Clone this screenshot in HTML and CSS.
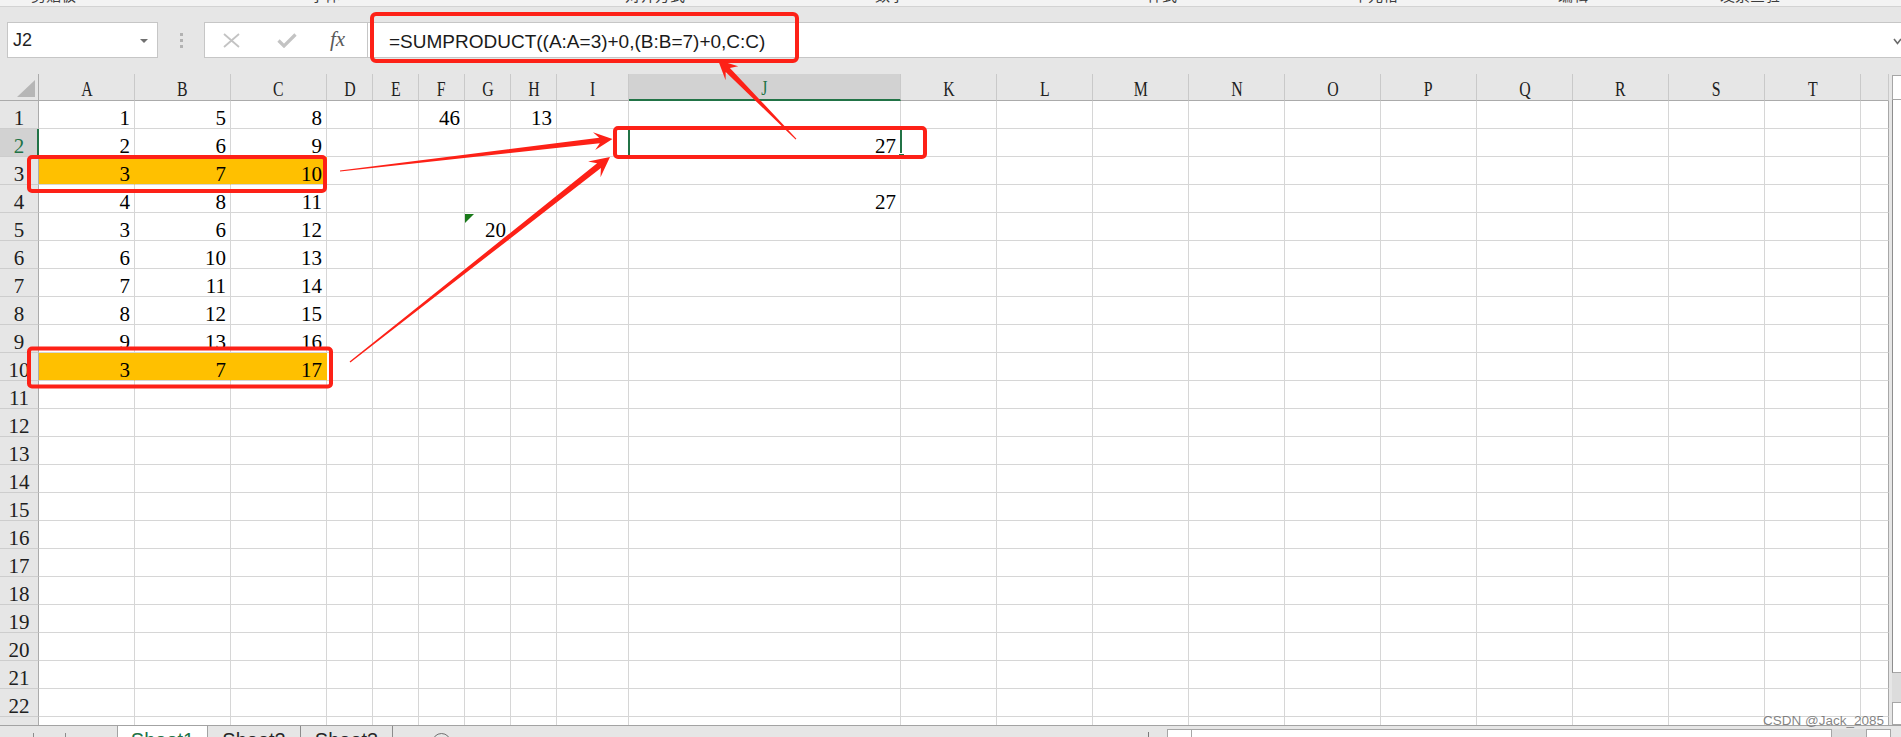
FILE: index.html
```html
<!DOCTYPE html>
<html lang="zh-CN">
<head>
<meta charset="utf-8">
<title>Excel SUMPRODUCT</title>
<link rel="stylesheet" href="styles.css">
</head>
<body>
<div class="ribbon">
  <div class="ribbon-labels"><span>剪贴板</span><span>字体</span><span>对齐方式</span><span>数字</span><span>样式</span><span>单元格</span><span>编辑</span><span>发票查验</span></div>
</div>
<div class="fbar">
  <div class="namebox">J2<span class="nb-arrow"></span></div>
  <div class="dots"><span></span><span></span><span></span></div>
  <div class="fx-icons">
    <svg class="ic-x" width="19" height="15" viewBox="0 0 19 15"><path d="M2 1 L17 14 M17 1 L2 14" stroke="#c3c3c3" stroke-width="1.8" fill="none"/></svg>
    <svg class="ic-ok" width="20" height="15" viewBox="0 0 20 15"><path d="M1.5 7.5 L7 13 L18.5 1.5" stroke="#c3c3c3" stroke-width="3.2" fill="none"/></svg>
    <span class="ic-fx">fx</span>
  </div>
  <div class="formula">=SUMPRODUCT((A:A=3)+0,(B:B=7)+0,C:C)<svg class="chev" width="8" height="7" viewBox="0 0 8 7"><path d="M1 1 L4.5 5.5 L8 1" stroke="#6a6a6a" stroke-width="1.6" fill="none"/></svg></div>
</div>
<div class="main">
  <div class="sheet">
    <div class="row hdr">
      <div class="corner"><svg width="18" height="17" viewBox="0 0 18 17"><polygon points="18,0 18,17 0,17" fill="#b6b6b6"/></svg></div>
      <div class="h"><span>A</span></div><div class="h"><span>B</span></div><div class="h"><span>C</span></div><div class="h"><span>D</span></div><div class="h"><span>E</span></div><div class="h"><span>F</span></div><div class="h"><span>G</span></div><div class="h"><span>H</span></div><div class="h"><span>I</span></div><div class="h hsel"><span>J</span></div><div class="h"><span>K</span></div><div class="h"><span>L</span></div><div class="h"><span>M</span></div><div class="h"><span>N</span></div><div class="h"><span>O</span></div><div class="h"><span>P</span></div><div class="h"><span>Q</span></div><div class="h"><span>R</span></div><div class="h"><span>S</span></div><div class="h"><span>T</span></div><div class="h"></div>
    </div>
    <div class="row"><b>1</b> <i>1</i><i>5</i><i>8</i><i></i><i></i><i>46</i><i></i><i>13</i> <i></i><i></i><i></i><i></i><i></i><i></i><i></i> <i></i><i></i><i></i><i></i><i></i><i></i></div>
    <div class="row"><b class="sel">2</b> <i>2</i><i>6</i><i>9</i> <i></i><i></i><i></i><i></i><i></i><i></i> <i class="active">27</i> <i></i><i></i><i></i><i></i><i></i><i></i><i></i> <i></i><i></i><i></i><i></i></div>
    <div class="row"><b>3</b> <i class="hl">3</i><i class="hl">7</i><i class="hl">10</i> <i></i><i></i><i></i><i></i><i></i><i></i><i></i> <i></i><i></i><i></i><i></i><i></i><i></i><i></i> <i></i><i></i><i></i><i></i></div>
    <div class="row"><b>4</b> <i>4</i><i>8</i><i>11</i> <i></i><i></i><i></i><i></i><i></i><i></i> <i>27</i> <i></i><i></i><i></i><i></i><i></i><i></i><i></i> <i></i><i></i><i></i><i></i></div>
    <div class="row"><b>5</b> <i>3</i><i>6</i><i>12</i> <i></i><i></i><i></i> <i class="err">20</i> <i></i><i></i><i></i><i></i><i></i><i></i><i></i> <i></i><i></i><i></i><i></i><i></i><i></i><i></i></div>
    <div class="row"><b>6</b> <i>6</i><i>10</i><i>13</i> <i></i><i></i><i></i><i></i><i></i><i></i><i></i> <i></i><i></i><i></i><i></i><i></i><i></i><i></i> <i></i><i></i><i></i><i></i></div>
    <div class="row"><b>7</b> <i>7</i><i>11</i><i>14</i> <i></i><i></i><i></i><i></i><i></i><i></i><i></i> <i></i><i></i><i></i><i></i><i></i><i></i><i></i> <i></i><i></i><i></i><i></i></div>
    <div class="row"><b>8</b> <i>8</i><i>12</i><i>15</i> <i></i><i></i><i></i><i></i><i></i><i></i><i></i> <i></i><i></i><i></i><i></i><i></i><i></i><i></i> <i></i><i></i><i></i><i></i></div>
    <div class="row"><b>9</b> <i>9</i><i>13</i><i>16</i> <i></i><i></i><i></i><i></i><i></i><i></i><i></i> <i></i><i></i><i></i><i></i><i></i><i></i><i></i> <i></i><i></i><i></i><i></i></div>
    <div class="row"><b>10</b> <i class="hl">3</i><i class="hl">7</i><i class="hl">17</i> <i></i><i></i><i></i><i></i><i></i><i></i><i></i> <i></i><i></i><i></i><i></i><i></i><i></i><i></i> <i></i><i></i><i></i><i></i></div>
    <div class="row"><b>11</b> <i></i><i></i><i></i><i></i><i></i><i></i><i></i> <i></i><i></i><i></i><i></i><i></i><i></i><i></i> <i></i><i></i><i></i><i></i><i></i><i></i><i></i></div>
    <div class="row"><b>12</b> <i></i><i></i><i></i><i></i><i></i><i></i><i></i> <i></i><i></i><i></i><i></i><i></i><i></i><i></i> <i></i><i></i><i></i><i></i><i></i><i></i><i></i></div>
    <div class="row"><b>13</b> <i></i><i></i><i></i><i></i><i></i><i></i><i></i> <i></i><i></i><i></i><i></i><i></i><i></i><i></i> <i></i><i></i><i></i><i></i><i></i><i></i><i></i></div>
    <div class="row"><b>14</b> <i></i><i></i><i></i><i></i><i></i><i></i><i></i> <i></i><i></i><i></i><i></i><i></i><i></i><i></i> <i></i><i></i><i></i><i></i><i></i><i></i><i></i></div>
    <div class="row"><b>15</b> <i></i><i></i><i></i><i></i><i></i><i></i><i></i> <i></i><i></i><i></i><i></i><i></i><i></i><i></i> <i></i><i></i><i></i><i></i><i></i><i></i><i></i></div>
    <div class="row"><b>16</b> <i></i><i></i><i></i><i></i><i></i><i></i><i></i> <i></i><i></i><i></i><i></i><i></i><i></i><i></i> <i></i><i></i><i></i><i></i><i></i><i></i><i></i></div>
    <div class="row"><b>17</b> <i></i><i></i><i></i><i></i><i></i><i></i><i></i> <i></i><i></i><i></i><i></i><i></i><i></i><i></i> <i></i><i></i><i></i><i></i><i></i><i></i><i></i></div>
    <div class="row"><b>18</b> <i></i><i></i><i></i><i></i><i></i><i></i><i></i> <i></i><i></i><i></i><i></i><i></i><i></i><i></i> <i></i><i></i><i></i><i></i><i></i><i></i><i></i></div>
    <div class="row"><b>19</b> <i></i><i></i><i></i><i></i><i></i><i></i><i></i> <i></i><i></i><i></i><i></i><i></i><i></i><i></i> <i></i><i></i><i></i><i></i><i></i><i></i><i></i></div>
    <div class="row"><b>20</b> <i></i><i></i><i></i><i></i><i></i><i></i><i></i> <i></i><i></i><i></i><i></i><i></i><i></i><i></i> <i></i><i></i><i></i><i></i><i></i><i></i><i></i></div>
    <div class="row"><b>21</b> <i></i><i></i><i></i><i></i><i></i><i></i><i></i> <i></i><i></i><i></i><i></i><i></i><i></i><i></i> <i></i><i></i><i></i><i></i><i></i><i></i><i></i></div>
    <div class="row"><b>22</b> <i></i><i></i><i></i><i></i><i></i><i></i><i></i> <i></i><i></i><i></i><i></i><i></i><i></i><i></i> <i></i><i></i><i></i><i></i><i></i><i></i><i></i></div>
    <div class="row part"><b></b> <i></i><i></i><i></i><i></i><i></i><i></i><i></i> <i></i><i></i><i></i><i></i><i></i><i></i><i></i> <i></i><i></i><i></i><i></i><i></i><i></i><i></i></div>
  </div>
  <div class="vscroll">
    <div class="v-up"></div>
    <div class="v-thumb"></div>
    <div class="v-track"></div>
    <div class="v-down"></div>
  </div>
</div>
<div class="tabbar">
  <div class="nav"><span class="navline"></span><span class="navline second"></span></div>
  <div class="tab active">Sheet1</div>
  <div class="tab t2">Sheet2</div>
  <div class="tab t3">Sheet3</div>
  <div class="addsheet"></div>
  <div class="split"></div>
  <div class="h-left"></div>
  <div class="h-thumb"></div>
  <div class="h-track"></div>
  <div class="h-right"></div>
</div>
<div class="watermark">CSDN @Jack_2085</div>
<svg class="overlay" width="1901" height="737" viewBox="0 0 1901 737">
  <g fill="none" stroke="#fd2117" stroke-width="4">
    <rect x="372" y="14" width="425" height="47" rx="4"/>
    <rect x="615" y="128" width="310" height="29" rx="3"/>
    <rect x="29" y="157" width="296" height="34" rx="3"/>
    <rect x="29" y="348.5" width="302" height="38" rx="3"/>
  </g>
  <g fill="#fd2117">
    <polygon points="340.1,171.6 599.8,143.3 595.2,150 612.5,139 593,132.2 599.2,137.7 339.9,170.4"/>
    <polygon points="350.4,362.5 600.9,168.1 600.5,177.2 610,157 588.1,161.5 597.1,163.3 349.6,361.5"/>
    <polygon points="796.4,138.7 729.9,67.9 738.2,66.2 718,60 725.6,80.2 725.7,72.1 795.6,139.4"/>
  </g>
</svg>
</body>
</html>
```
FILE: styles.css
```css
html, body {
  margin: 0;
  padding: 0;
}
body {
  width: 1901px;
  height: 737px;
  overflow: hidden;
  background: #e6e6e6;
  font-family: "Liberation Sans", Arial, sans-serif;
  position: relative;
}

/* ribbon remnant */
.ribbon {
  height: 6px;
  background: #f3f3f3;
  border-bottom: 1px solid #d3d3d3;
  overflow: hidden;
}
.ribbon-labels {
  display: flex;
  margin-top: -13px;
  padding-left: 31px;
  font: 15px/15px "Noto Sans CJK SC", sans-serif;
  color: #3c3c3c;
  white-space: nowrap;
}
.ribbon-labels span:nth-child(1) { width: 279px; }
.ribbon-labels span:nth-child(2) { width: 315px; }
.ribbon-labels span:nth-child(3) { width: 250px; }
.ribbon-labels span:nth-child(4) { width: 272px; }
.ribbon-labels span:nth-child(5) { width: 206px; }
.ribbon-labels span:nth-child(6) { width: 205px; }
.ribbon-labels span:nth-child(7) { width: 162px; }

/* formula bar */
.fbar {
  height: 67px;
  box-sizing: border-box;
  padding-top: 15px;
  display: flex;
  align-items: flex-start;
}
.namebox {
  margin-left: 7px;
  width: 151px;
  height: 36px;
  box-sizing: border-box;
  border: 1px solid #c6c6c6;
  background: #fff;
  display: flex;
  align-items: center;
  padding-left: 5px;
  font-size: 18px;
  color: #1f1f1f;
  position: relative;
}
.nb-arrow {
  position: absolute;
  right: 9px;
  top: 16px;
  width: 0;
  height: 0;
  border-left: 4px solid transparent;
  border-right: 4px solid transparent;
  border-top: 4px solid #707070;
}
.dots {
  width: 46px;
  height: 36px;
  display: flex;
  flex-direction: column;
  align-items: center;
  justify-content: center;
  gap: 3px;
}
.dots span {
  width: 3px;
  height: 3px;
  background: #b2b2b2;
}
.fx-icons {
  width: 164px;
  height: 36px;
  box-sizing: border-box;
  border: 1px solid #c6c6c6;
  background: #fff;
  display: flex;
  align-items: center;
}
.ic-x { margin-left: 17px; }
.ic-ok { margin-left: 36px; }
.ic-fx {
  margin-left: 33px;
  font-family: "Liberation Serif", serif;
  font-style: italic;
  font-size: 21px;
  color: #5a5a5a;
  line-height: 20px;
  padding-bottom: 2px;
}
.formula {
  flex: 1;
  height: 36px;
  box-sizing: border-box;
  border-top: 1px solid #c6c6c6;
  border-bottom: 1px solid #c6c6c6;
  background: #fff;
  padding-left: 21px;
  padding-top: 3px;
  font-size: 19px;
  line-height: 31px;
  color: #1a1a1a;
  position: relative;
  white-space: nowrap;
}
.chev {
  position: absolute;
  right: 0;
  top: 15px;
}

/* main sheet area */
.main {
  display: flex;
  height: 651px;
}
.sheet {
  width: 1889px;
  display: flex;
  flex-direction: column;
  background: #fff;
}
.row {
  display: grid;
  grid-template-columns: 39px 96px 96px 96px 46px 46px 46px 46px 46px 72px 272px repeat(10, 96px) 28px;
  height: 28px;
  flex: none;
}
.row.hdr {
  height: 27px;
}
.row.part {
  height: 8px;
}
.row > * {
  box-sizing: border-box;
  border-right: 1px solid #d6d6d6;
  border-bottom: 1px solid #d6d6d6;
  display: flex;
  align-items: flex-end;
  justify-content: flex-end;
  padding-right: 4px;
  font-family: "Liberation Serif", "Times New Roman", serif;
  font-size: 21px;
  line-height: 20px;
  font-weight: normal;
  font-style: normal;
  color: #000;
  min-width: 0;
}
.row > :last-child {
  border-right-color: #a8a8a8;
}
.row.part > * {
  border-bottom: none;
}
.row .corner {
  background: #e6e6e6;
  border-right-color: #ababab;
  border-bottom-color: #ababab;
  padding: 0 3px 3px 0;
}
.row .h {
  background: #e6e6e6;
  border-right-color: #c9c9c9;
  border-bottom-color: #ababab;
  justify-content: center;
  padding: 0;
  font-size: 22px;
  line-height: 22px;
  color: #202020;
}
.row .h span {
  display: inline-block;
  transform: scaleX(0.72);
}
.row .hsel {
  background: #d2d2d2;
  color: #217346;
  border-bottom: 2px solid #217346;
}
.row b {
  background: #e6e6e6;
  border-right-color: #ababab;
  border-bottom-color: #cdcdcd;
  justify-content: center;
  padding: 0;
  color: #202020;
}
.row b.sel {
  background: #d2d2d2;
  color: #217346;
  border-right-color: #217346;
  box-shadow: inset -1px 0 0 #217346;
}
.row .hl {
  background: #ffc000;
  border-right-color: #ffc000;
}
.row .err {
  position: relative;
}
.row .err::before {
  content: "";
  position: absolute;
  left: 0;
  top: 1px;
  width: 0;
  height: 0;
  border-top: 9px solid #1a7a1a;
  border-right: 9px solid transparent;
}
.row .active {
  position: relative;
}
.row .active::before {
  content: "";
  position: absolute;
  left: -1px;
  top: -1px;
  right: -2px;
  bottom: -1px;
  border: 2px solid #217346;
}
.row .active::after {
  content: "";
  position: absolute;
  right: -5px;
  bottom: -4px;
  width: 5px;
  height: 5px;
  background: #217346;
  border: 1px solid #fff;
}

/* vertical scrollbar */
.vscroll {
  width: 9px;
  margin-left: 3px;
  display: flex;
  flex-direction: column;
}
.v-up {
  margin-top: 1px;
  height: 25px;
  box-sizing: border-box;
  border: 1px solid #a6a6a6;
  border-right: none;
  background: #fff;
}
.v-thumb {
  height: 573px;
  box-sizing: border-box;
  border-left: 1px solid #8e8e8e;
  border-bottom: 1px solid #a6a6a6;
  background: #fff;
}
.v-track {
  height: 29px;
  background: #dcdcdc;
}
.v-down {
  height: 23px;
  box-sizing: border-box;
  border: 1px solid #a6a6a6;
  border-right: none;
  background: #fff;
}

/* sheet tabs */
.tabbar {
  height: 11px;
  border-top: 1px solid #a3a3a3;
  display: flex;
  align-items: flex-start;
  overflow: hidden;
  background: #e6e6e6;
}
.nav {
  width: 117px;
  height: 11px;
  display: flex;
}
.navline {
  width: 1px;
  height: 4px;
  margin-top: 7px;
  margin-left: 33px;
  background: #8c8c8c;
}
.navline.second {
  margin-left: 31px;
}
.tab {
  height: 11px;
  box-sizing: border-box;
  padding-top: 4px;
  text-align: center;
  font-size: 20px;
  line-height: 20px;
  color: #262626;
  white-space: nowrap;
  position: relative;
}
.tab.active {
  width: 91px;
  background: #fff;
  color: #217346;
  border-left: 1px solid #a3a3a3;
  border-right: 1px solid #a3a3a3;
}
.tab.t2 {
  width: 93px;
  border-right: 1px solid #8c8c8c;
}
.tab.t3 {
  width: 92px;
  border-right: 1px solid #8c8c8c;
}
.addsheet {
  width: 19px;
  height: 19px;
  box-sizing: border-box;
  margin-left: 39px;
  margin-top: 7px;
  border: 1.5px solid #707070;
  border-radius: 50%;
}
.split {
  width: 1px;
  height: 5px;
  margin-top: 6px;
  margin-left: 697px;
  background: #7a7a7a;
}
.h-left, .h-right {
  width: 25px;
  height: 9px;
  margin-top: 3px;
  box-sizing: border-box;
  border: 1px solid #a6a6a6;
  border-bottom: none;
  background: #fff;
}
.h-left { margin-left: 18px; }
.h-thumb {
  width: 640px;
  height: 9px;
  margin-top: 3px;
  box-sizing: border-box;
  border-top: 1px solid #a6a6a6;
  border-right: 1px solid #a6a6a6;
  background: #fff;
}
.h-track {
  width: 34px;
  height: 9px;
  margin-top: 3px;
  background: #dcdcdc;
}

.watermark {
  position: absolute;
  right: 17px;
  bottom: 9px;
  font-family: "Liberation Sans", Arial, sans-serif;
  font-size: 13.5px;
  line-height: 14px;
  color: rgba(110, 110, 110, 0.85);
  white-space: nowrap;
}

.overlay {
  position: absolute;
  left: 0;
  top: 0;
  pointer-events: none;
}
```
